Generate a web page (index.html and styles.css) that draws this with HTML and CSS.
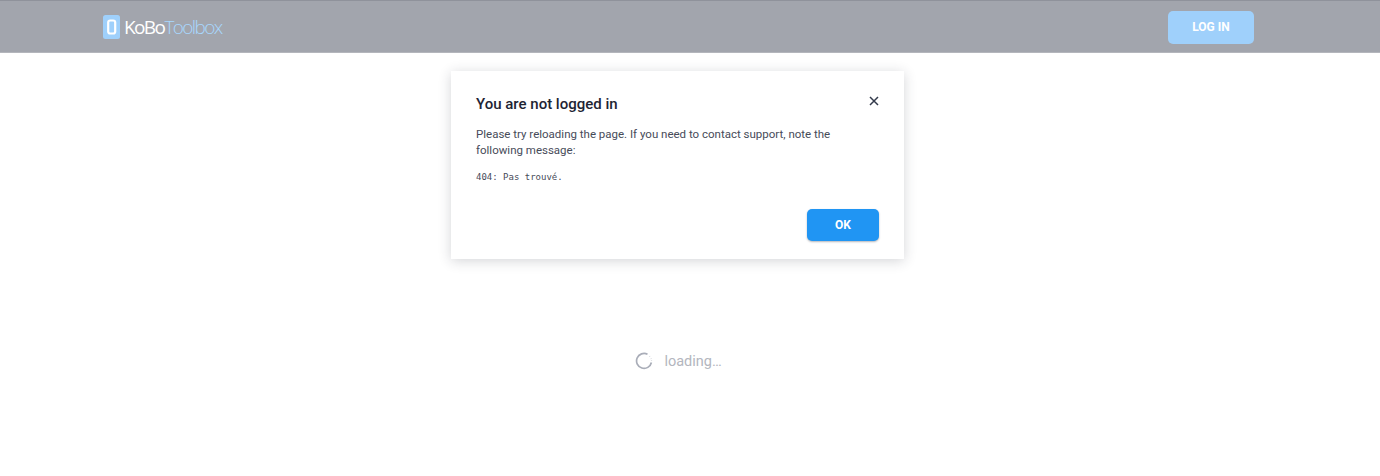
FILE: index.html
```html
<!DOCTYPE html>
<html lang="en">
<head>
  <meta charset="UTF-8" />
  <title>KoBoToolbox</title>
  <link rel="stylesheet" href="styles.css">
</head>
<body>
  <div class="header">
    <div class="logo">
      <svg class="logo-icon" width="17" height="24" viewBox="0 0 17 24">
        <rect width="17" height="24" rx="2.5" fill="#9fd0fb" />
        <rect x="5.2" y="5.5" width="7" height="13" rx="2" fill="none" stroke="#fff" stroke-width="2.2" />
      </svg>
      <span class="logo-text">KoBo<span class="logo-light">Toolbox</span></span>
    </div>
    <button class="login">LOG IN</button>
  </div>

  <div class="main">
    <div class="modal">
      <div class="modal-head">
        <h2>You are not logged in</h2>
        <svg class="close" width="10" height="10" viewBox="0 0 10 10">
          <path d="M1 1 L9 9 M9 1 L1 9" stroke="#333a4b" stroke-width="1.5" fill="none" />
        </svg>
      </div>
      <p>Please try reloading the page. If you need to contact support, note the following message:</p>
      <pre>404: Pas trouvé.</pre>
      <div class="modal-foot">
        <button class="ok">OK</button>
      </div>
    </div>

    <div class="loading">
      <svg width="18" height="18" viewBox="0 0 18 18">
        <path d="M12.5 2.2 A7.5 7.5 0 1 0 16.4 10.5" fill="none" stroke="#a9adb8" stroke-width="1.7" />
        <path d="M14.6 4.2 L14.9 4.6 M16 6.5 L16.2 7 M16.5 8.3 L16.5 8.8" fill="none" stroke="#c4c7ce" stroke-width="1.2" />
      </svg>
      <span>loading…</span>
    </div>
  </div>
</body>
</html>
```

FILE: styles.css
```css
body {
  font-family: Roboto, sans-serif;
  margin: 0;
  background-color: white;
  height: 476px;
  overflow: hidden;
}
.header {
  height: 52px;
  box-sizing: border-box;
  background-color: #a2a5ad;
  border-top: 1px solid #8f929b;
  display: flex;
  align-items: center;
  justify-content: space-between;
  padding: 1px 126px 0 103px;
  box-shadow: 0 1px 0 #b4b6bc;
}
.logo {
  display: flex;
  align-items: center;
  gap: 4px;
}
.logo-text {
  font-family: "Open Sans", sans-serif;
  font-size: 19px;
  letter-spacing: -1.6px;
  font-weight: 400;
  color: white;
}
.logo-light {
  font-weight: 300;
  color: #a8d8ff;
}
.login {
  width: 86px;
  height: 33px;
  background-color: #9fd0fb;
  color: white;
  border: none;
  border-radius: 5px;
  font-family: Roboto, sans-serif;
  font-size: 12px;
  font-weight: 700;
}
.main {
  display: flex;
  flex-direction: column;
  align-items: center;
  padding-top: 19px;
  padding-right: 25px;
}
.modal {
  width: 453px;
  height: 188px;
  box-sizing: border-box;
  padding: 24px 25px;
  background-color: white;
  box-shadow: 0 2px 12px rgba(40, 45, 60, 0.2);
  display: flex;
  flex-direction: column;
}
.modal-head {
  display: flex;
  justify-content: space-between;
  align-items: flex-start;
}
.modal-head h2 {
  margin: 0;
  font-size: 15px;
  font-weight: 500;
  line-height: 18px;
  color: #1e2433;
}
.close {
  margin-top: 1px;
}
.modal p {
  margin: 13px 0 0;
  font-size: 11.5px;
  line-height: 16px;
  color: #474b59;
}
.modal pre {
  margin: 13px 0 0;
  font-family: "DejaVu Sans Mono", monospace;
  font-size: 9px;
  line-height: 12px;
  color: #474b59;
}
.modal-foot {
  margin-top: auto;
  display: flex;
  justify-content: flex-end;
}
.ok {
  width: 72px;
  height: 32px;
  margin-bottom: -6px;
  background-color: #2095f3;
  color: white;
  border: none;
  border-radius: 5px;
  box-shadow: 0 1px 2px rgba(40, 45, 60, 0.35);
  font-family: Roboto, sans-serif;
  font-size: 12px;
  font-weight: 700;
}
.loading {
  margin-top: 93px;
  margin-left: 2px;
  display: flex;
  align-items: center;
  gap: 11px;
  font-size: 14.5px;
  color: #b3b6be;
}
```
